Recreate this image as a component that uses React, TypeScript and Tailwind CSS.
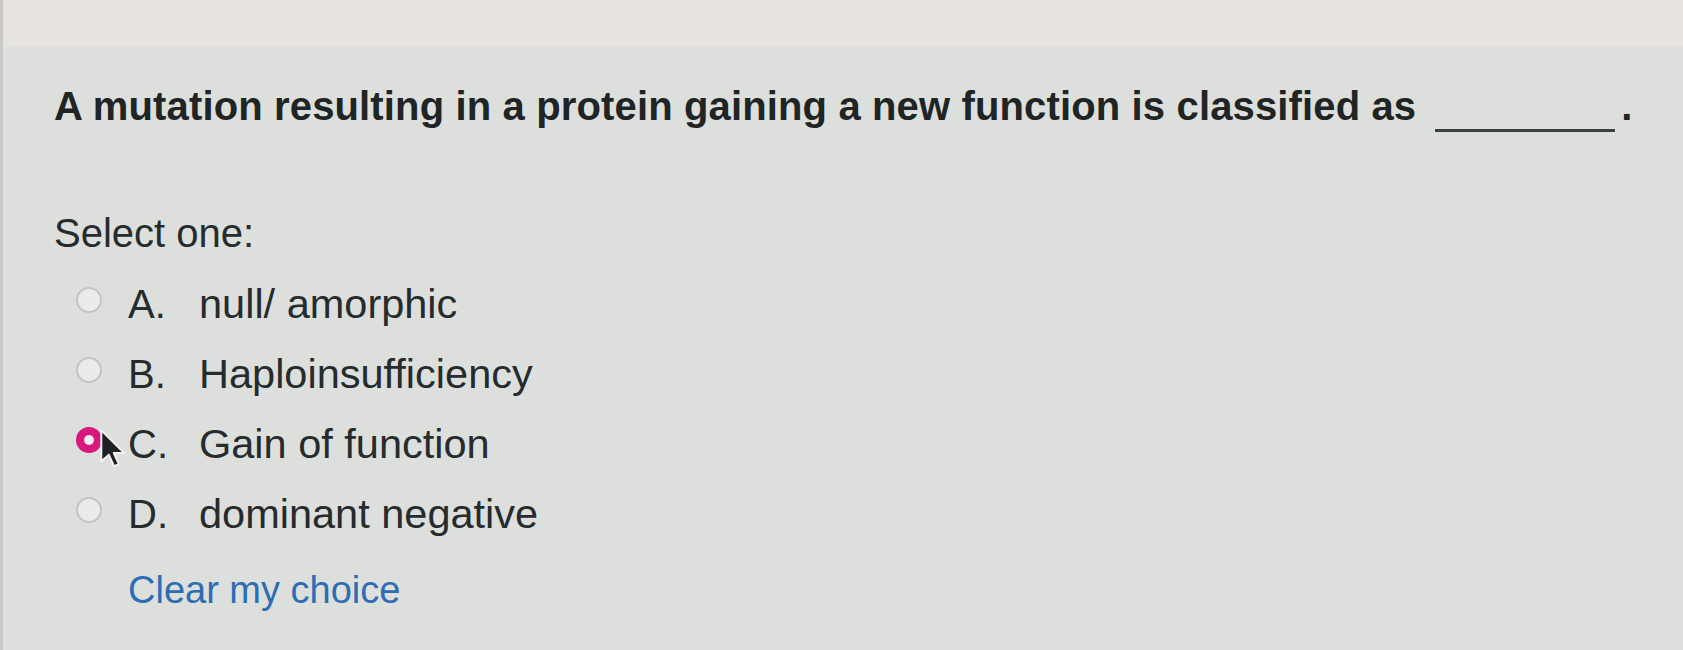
import React from 'react';

const options = [
    { letter: 'A.', text: 'null/ amorphic' },
    { letter: 'B.', text: 'Haploinsufficiency' },
    { letter: 'C.', text: 'Gain of function', checked: true },
    { letter: 'D.', text: 'dominant negative' },
];

// mouse pointer sitting over option C
const Cursor = () => (
    <svg className="absolute left-[96px] top-[428px] w-[30px] h-[44px]" viewBox="0 0 26 38">
        <path
            d="M2 2 L2 29 L8.5 23 L13 33 L17.2 31.2 L12.8 21.6 L21.8 21.6 Z"
            fill="#202122"
            stroke="#f2f2f2"
            strokeWidth={1.7}
            strokeLinejoin="round"
        />
    </svg>
);

export default function App() {
    return (
        <div className="relative w-[1683px] h-[650px] overflow-hidden bg-[#dcdfdc] border-l-[3px] border-[#c8cac8] font-['Liberation_Sans',Arial,sans-serif] text-[#262b2d]">
            <div className="h-[47px] bg-[#e7e3df]" />

            <div className="pl-[51px]">
                <h1 className="mt-[36px] text-[40px] leading-[46px] font-bold tracking-[0.14px] text-[#1f2425] whitespace-nowrap">
                    A mutation resulting in a protein gaining a new function is classified as
                    <span className="inline-block ml-[19px] w-[180px] h-[30px] border-b-[3px] border-[#3b4141] align-[-12px]" />
                    <span className="ml-[6px]">.</span>
                </h1>

                <div className="mt-[78px] text-[40px] leading-[46px]">Select one:</div>

                <div className="mt-[13px]">
                    {options.map((o) => (
                        <div key={o.letter} className="flex items-center h-[70px]">
                            {o.checked ? (
                                <span className="ml-[22px] mb-2 w-[26px] h-[26px] rounded-full bg-[#d8187c] flex items-center justify-center">
                                    <span className="w-[10px] h-[10px] rounded-full bg-[#f6eef2]" />
                                </span>
                            ) : (
                                <span className="ml-[22px] mb-2 w-[26px] h-[26px] rounded-full bg-[#ebecea] border-2 border-[#c2c5c3]" />
                            )}
                            <span className="ml-[26px] w-[71px] text-[40px] leading-[46px]">{o.letter}</span>
                            <span className="text-[41.5px] leading-[46px]">{o.text}</span>
                        </div>
                    ))}
                </div>

                <div className="mt-[18px] ml-[74px] text-[38px] leading-[46px] text-[#2c6db5]">Clear my choice</div>
            </div>

            <Cursor />
        </div>
    );
}
